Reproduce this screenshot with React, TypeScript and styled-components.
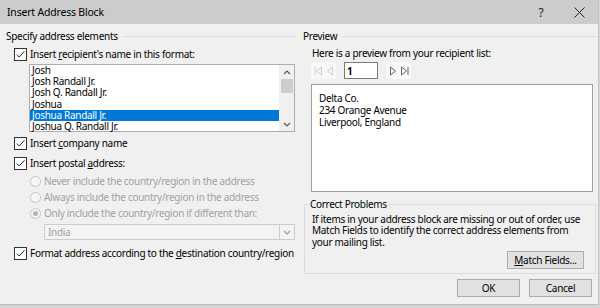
import styled, { createGlobalStyle } from "styled-components";

const Global = createGlobalStyle`
    *, *::before, *::after {
        box-sizing: border-box;
    }
    html, body {
        margin: 0;
        padding: 0;
        background: #d6d6d6;
    }
    body {
        font-family: "Noto Sans", "Open Sans", sans-serif;
        font-size: 10px;
        letter-spacing: -0.3px;
        color: #000;
    }
`;

const Dialog = styled.div`
    width: 599px;
    height: 305px;
    background: #f0f0f0;
    border-right: 1px solid #c4c4c4;
    border-bottom: 1px solid #bdbdbd;
    display: flex;
    flex-direction: column;
`;

const TitleBar = styled.div`
    height: 24px;
    background: #cccccc;
    display: flex;
    align-items: center;
    padding-left: 7px;
    font-size: 10.5px;
    letter-spacing: -0.2px;
`;

const Title = styled.div`
    flex: 1;
`;

const TitleButton = styled.div`
    width: 38px;
    display: flex;
    justify-content: center;
    align-items: center;
    font-size: 12px;
    color: #222;
`;

const Body = styled.div`
    display: grid;
    grid-template-columns: 290px 293px;
    column-gap: 7px;
    padding: 5px 0 0 6px;
`;

const Column = styled.div`
    display: flex;
    flex-direction: column;
`;

const GroupHeader = styled.div`
    display: flex;
    align-items: center;
    height: 14px;
    gap: 5px;
    white-space: nowrap;
    &::after {
        content: "";
        flex: 1;
        height: 1px;
        background: #dcdcdc;
    }
`;

const Row = styled.div<{ $top: number }>`
    display: flex;
    align-items: center;
    height: 14px;
    margin-top: ${(p) => p.$top}px;
    margin-left: 8px;
    gap: 3px;
    white-space: nowrap;
`;

const Box = styled.div`
    width: 13px;
    height: 13px;
    border: 1px solid #333;
    background: #fff;
    display: flex;
    align-items: center;
    justify-content: center;
    flex-shrink: 0;
`;

const ListBox = styled.div`
    margin: 3px 1px 0 23px;
    height: 68px;
    border: 1px solid #adadad;
    background: #fff;
    display: flex;
`;

const Items = styled.div`
    flex: 1;
`;

const Item = styled.div<{ $selected?: boolean }>`
    height: 11.2px;
    line-height: 11.2px;
    padding-left: 2px;
    background: ${(p) => (p.$selected ? "#0078d7" : "transparent")};
    color: ${(p) => (p.$selected ? "#fff" : "#000")};
    white-space: nowrap;
`;

const ScrollBar = styled.div`
    width: 15px;
    background: #f0f0f0;
    display: flex;
    flex-direction: column;
    align-items: center;
`;

const ScrollArrow = styled.div`
    height: 14px;
    display: flex;
    align-items: center;
    justify-content: center;
`;

const Thumb = styled.div`
    width: 12px;
    height: 14px;
    background: #cdcdcd;
`;

const ScrollTrack = styled.div`
    flex: 1;
`;

const RadioRow = styled.div<{ $top?: number }>`
    display: flex;
    align-items: center;
    height: 16px;
    margin-top: ${(p) => p.$top ?? 0}px;
    margin-left: 24px;
    gap: 3px;
    color: #a2a2a2;
    white-space: nowrap;
`;

const Radio = styled.div`
    width: 11px;
    height: 11px;
    border-radius: 50%;
    border: 1px solid #c6c6c6;
    background: #f5f5f5;
    display: flex;
    align-items: center;
    justify-content: center;
`;

const Dot = styled.div`
    width: 5px;
    height: 5px;
    border-radius: 50%;
    background: #b5b5b5;
`;

const Select = styled.div`
    margin: 3px 1px 0 38px;
    height: 16px;
    border: 1px solid #cccccc;
    background: #f3f3f3;
    display: flex;
    align-items: center;
    color: #a2a2a2;
`;

const SelectText = styled.div`
    flex: 1;
    padding-left: 3px;
`;

const SelectArrow = styled.div`
    width: 15px;
    height: 14px;
    border-left: 1px solid #cccccc;
    display: flex;
    align-items: center;
    justify-content: center;
`;

const Caption = styled.div`
    margin: 3px 0 0 9px;
    height: 14px;
    display: flex;
    align-items: center;
    white-space: nowrap;
`;

const NavRow = styled.div`
    display: flex;
    align-items: center;
    height: 17px;
    margin: 2px 0 0 8px;
    gap: 8px;
`;

const NavPair = styled.div`
    display: flex;
    align-items: center;
    gap: 2px;
    padding: 0 2px 0 3px;
    height: 17px;
    background: #f8f8f8;
`;

const NavInput = styled.div`
    width: 34px;
    height: 17px;
    border: 1px solid #7a7a7a;
    background: #fff;
    display: flex;
    align-items: center;
    padding-left: 2px;
    font-weight: 700;
`;

const PreviewBox = styled.div`
    margin: 5px 3px 0 8px;
    height: 108px;
    border: 1px solid #a0a0a0;
    background: #fff;
    padding: 7px 0 0 7px;
    line-height: 12px;
`;

const Fieldset = styled.fieldset`
    margin: 6px 0 0 1px;
    padding: 4px 11px 4px 7px;
    border: 1px solid #dcdcdc;
    min-width: 0;
`;

const Legend = styled.legend`
    padding: 0 1px;
    margin-left: -3px;
    line-height: 12px;
`;

const Paragraph = styled.div`
    line-height: 11.3px;
    white-space: nowrap;
`;

const ButtonRight = styled.div`
    display: flex;
    justify-content: flex-end;
    gap: 9px;
`;

const Button = styled.div<{ $width: number }>`
    width: ${(p) => p.$width}px;
    height: 18px;
    border: 1px solid #adadad;
    background: #e1e1e1;
    display: flex;
    align-items: center;
    justify-content: center;
`;

const Footer = styled(ButtonRight)`
    margin: 5px 4px 0 0;
`;

const MatchRow = styled(ButtonRight)`
    margin-top: 3px;
`;

function Check() {
    return (
        <svg width="11" height="11" viewBox="0 0 11 11">
            <path d="M1.8 5.6 L4.2 8 L9.4 2.4" fill="none" stroke="#222" strokeWidth="1" />
        </svg>
    );
}

function CheckRow({ top, children }: { top: number; children: React.ReactNode }) {
    return (
        <Row $top={top}>
            <Box>
                <Check />
            </Box>
            <span>{children}</span>
        </Row>
    );
}

function Chevron({ up, color = "#555" }: { up?: boolean; color?: string }) {
    return (
        <svg width="8" height="5" viewBox="0 0 8 5">
            <path
                d={up ? "M1 4 L4 1 L7 4" : "M1 1 L4 4 L7 1"}
                fill="none"
                stroke={color}
                strokeWidth="1.1"
            />
        </svg>
    );
}

function NavIcon({ dir, bar, color }: { dir: "left" | "right"; bar?: boolean; color: string }) {
    const tri = dir === "left" ? "M7.5 1 L2.5 5 L7.5 9 Z" : "M1.5 1 L6.5 5 L1.5 9 Z";
    const line = dir === "left" ? "M1 1 V9" : "M8 1 V9";
    return (
        <svg width="9" height="10" viewBox="0 0 9 10">
            <path d={tri} fill="none" stroke={color} strokeWidth="0.9" />
            {bar && <path d={line} stroke={color} strokeWidth="0.9" />}
        </svg>
    );
}

const names = [
    "Josh",
    "Josh Randall Jr.",
    "Josh Q. Randall Jr.",
    "Joshua",
    "Joshua Randall Jr.",
    "Joshua Q. Randall Jr.",
];

export default function App() {
    return (
        <>
            <Global />
            <Dialog>
                <TitleBar>
                    <Title>Insert Address Block</Title>
                    <TitleButton>?</TitleButton>
                    <TitleButton>
                        <svg width="11" height="11" viewBox="0 0 11 11">
                            <path d="M0.5 0.5 L10.5 10.5 M10.5 0.5 L0.5 10.5" stroke="#222" strokeWidth="1" />
                        </svg>
                    </TitleButton>
                </TitleBar>
                <Body>
                    <Column>
                        <GroupHeader>Specify address elements</GroupHeader>
                        <CheckRow top={4}>
                            Insert <u>r</u>ecipient's name in this format:
                        </CheckRow>
                        <ListBox>
                            <Items>
                                {names.map((n, i) => (
                                    <Item key={n} $selected={i === 4}>
                                        {n}
                                    </Item>
                                ))}
                            </Items>
                            <ScrollBar>
                                <ScrollArrow>
                                    <Chevron up />
                                </ScrollArrow>
                                <Thumb />
                                <ScrollTrack />
                                <ScrollArrow>
                                    <Chevron />
                                </ScrollArrow>
                            </ScrollBar>
                        </ListBox>
                        <CheckRow top={4}>
                            Insert <u>c</u>ompany name
                        </CheckRow>
                        <CheckRow top={6}>
                            Insert postal <u>a</u>ddress:
                        </CheckRow>
                        <RadioRow $top={3}>
                            <Radio />
                            <span>Never include the country/region in the address</span>
                        </RadioRow>
                        <RadioRow>
                            <Radio />
                            <span>Always include the country/region in the address</span>
                        </RadioRow>
                        <RadioRow>
                            <Radio>
                                <Dot />
                            </Radio>
                            <span>Only include the country/region if different than:</span>
                        </RadioRow>
                        <Select>
                            <SelectText>India</SelectText>
                            <SelectArrow>
                                <Chevron color="#9a9a9a" />
                            </SelectArrow>
                        </Select>
                        <CheckRow top={6}>
                            Format address according to the <u>d</u>estination country/region
                        </CheckRow>
                    </Column>
                    <Column>
                        <GroupHeader>Preview</GroupHeader>
                        <Caption>Here is a preview from your recipient list:</Caption>
                        <NavRow>
                            <NavPair>
                                <NavIcon dir="left" bar color="#c8c8c8" />
                                <NavIcon dir="left" color="#c8c8c8" />
                            </NavPair>
                            <NavInput>1</NavInput>
                            <NavPair>
                                <NavIcon dir="right" color="#555" />
                                <NavIcon dir="right" bar color="#555" />
                            </NavPair>
                        </NavRow>
                        <PreviewBox>
                            <div>Delta Co.</div>
                            <div>234 Orange Avenue</div>
                            <div>Liverpool, England</div>
                        </PreviewBox>
                        <Fieldset>
                            <Legend>Correct Problems</Legend>
                            <Paragraph>
                                If items in your address block are missing or out of order, use
                                <br />
                                Match Fields to identify the correct address elements from
                                <br />
                                your mailing list.
                            </Paragraph>
                            <MatchRow>
                                <Button $width={77}>
                                    <span>
                                        <u>M</u>atch Fields...
                                    </span>
                                </Button>
                            </MatchRow>
                        </Fieldset>
                        <Footer>
                            <Button $width={63}>OK</Button>
                            <Button $width={63}>Cancel</Button>
                        </Footer>
                    </Column>
                </Body>
            </Dialog>
        </>
    );
}
